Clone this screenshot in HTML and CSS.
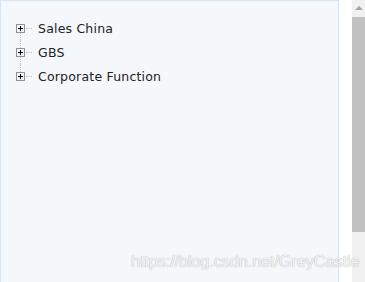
FILE: index.html
```html
<!DOCTYPE html>
<html>
<head>
<meta charset="utf-8">
<link rel="stylesheet" href="styles.css">
</head>
<body>
<div class="page">
  <div class="panel">
    <ul class="tree">
      <li class="node first">
        <span class="hit"><svg width="9" height="9" viewBox="0 0 9 9"><rect x="0.5" y="0.5" width="8" height="8" fill="#f4f4f4" stroke="#8593a6"/><path d="M2 4.5h5M4.5 2v5" stroke="#000" stroke-width="1"/></svg></span>
        <span class="dots"></span>
        <span class="label">Sales China</span>
      </li>
      <li class="node">
        <span class="hit"><svg width="9" height="9" viewBox="0 0 9 9"><rect x="0.5" y="0.5" width="8" height="8" fill="#f4f4f4" stroke="#8593a6"/><path d="M2 4.5h5M4.5 2v5" stroke="#000" stroke-width="1"/></svg></span>
        <span class="dots"></span>
        <span class="label">GBS</span>
      </li>
      <li class="node last">
        <span class="hit"><svg width="9" height="9" viewBox="0 0 9 9"><rect x="0.5" y="0.5" width="8" height="8" fill="#f4f4f4" stroke="#8593a6"/><path d="M2 4.5h5M4.5 2v5" stroke="#000" stroke-width="1"/></svg></span>
        <span class="dots"></span>
        <span class="label">Corporate Function</span>
      </li>
    </ul>
  </div>
  <div class="scrollbar">
    <div class="arrow"></div>
    <div class="thumb"></div>
  </div>
  <div class="watermark">https://blog.csdn.net/GreyCastle</div>
</div>
</body>
</html>
```
FILE: styles.css
```css
html, body { margin: 0; padding: 0; }
body { width: 365px; height: 282px; overflow: hidden; background: #fff; font-family: "DejaVu Sans", Verdana, sans-serif; }
.page { position: relative; display: flex; width: 365px; height: 282px; }
.panel {
  flex: none;
  width: 337px;
  height: 281px;
  border: 1px solid #d6e6f6;
  border-bottom: none;
  background: #f5f8fb;
  margin-right: 13px;
}
.tree { list-style: none; margin: 0; padding: 15px 0 0 15px; }
.node { display: flex; align-items: center; height: 24px; position: relative; }
.hit { width: 9px; height: 9px; display: block; position: relative; z-index: 1; }
.hit svg { display: block; }
.node::before {
  content: ""; position: absolute; left: 4px; top: 0; bottom: 0;
  border-left: 1px dotted #c4c4c4;
}
.node.first::before { top: 12px; }
.node.last::before { bottom: 12px; }
.dots { width: 6px; height: 0; border-top: 1px dotted #c4c4c4; margin-left: 1px; }
.label { margin-left: 6px; font-size: 12.5px; color: #222; letter-spacing: 0.2px; }
.scrollbar { flex: none; width: 13px; height: 282px; background: #f1f1f1; position: relative; }
.arrow {
  position: absolute; left: 3px; top: 6px; width: 0; height: 0;
  border-left: 4px solid transparent; border-right: 4px solid transparent;
  border-bottom: 4px solid #a3a3a3;
}
.thumb { position: absolute; left: 0; top: 17px; width: 13px; height: 215px; background: #c1c1c1; }
.watermark {
  position: absolute; left: 131px; top: 252px;
  font-family: "Liberation Sans", Arial, sans-serif; font-size: 16.5px;
  color: rgba(255,255,255,0.9);
  text-shadow: 0 0 1px rgba(0,0,0,0.25), 0 0 1px rgba(0,0,0,0.2);
  letter-spacing: -0.2px;
}
```
